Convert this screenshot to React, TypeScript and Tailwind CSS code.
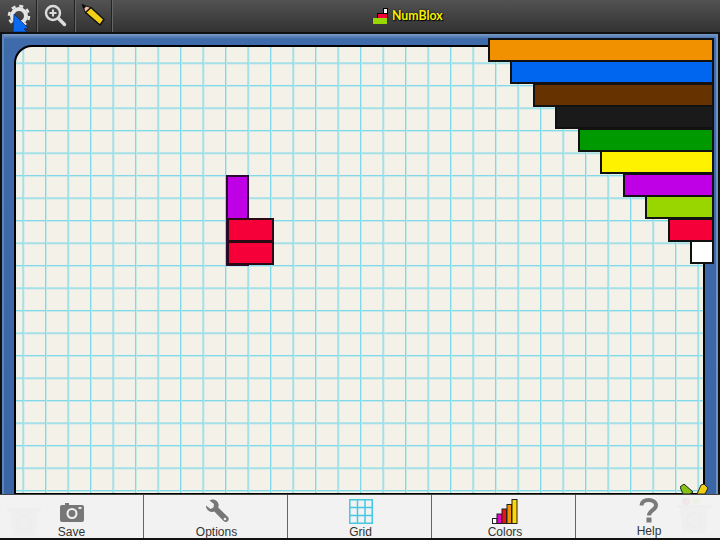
import React from "react";

const rods = [
  { w: 226, c: "#f29100" },
  { w: 203.5, c: "#0066f0" },
  { w: 181, c: "#663300" },
  { w: 158.5, c: "#1a1a1a" },
  { w: 136, c: "#009900" },
  { w: 113.5, c: "#fff200" },
  { w: 91, c: "#bf00e6" },
  { w: 68.5, c: "#99d600" },
  { w: 46, c: "#f50038" },
  { w: 23.5, c: "#ffffff" },
];

function GearIcon() {
  return (
    <svg width="32" height="32" viewBox="0 0 32 32" className="block">
      <circle cx="19" cy="16" r="7" fill="none" stroke="#e4e4e4" strokeWidth="4" />
      <circle cx="19" cy="16" r="10" fill="none" stroke="#e4e4e4" strokeWidth="2.5" strokeDasharray="4 3.85" />
      <polygon points="14,14 28,28 24,29 27,32 13,32" fill="#0a6af0" stroke="#0b2a66" strokeWidth="0.7" />
    </svg>
  );
}

function ZoomIcon() {
  return (
    <svg width="38" height="32" viewBox="0 0 38 32" className="block">
      <circle cx="16" cy="13" r="7" fill="none" stroke="#dcdcdc" strokeWidth="2.4" />
      <path d="M12.5 13h7M16 9.5v7" stroke="#dcdcdc" strokeWidth="2" />
      <path d="M21.5 18.5L27.5 24.5" stroke="#dcdcdc" strokeWidth="3.4" strokeLinecap="round" />
    </svg>
  );
}

function PencilIcon() {
  return (
    <svg width="37" height="32" viewBox="0 0 37 32" className="block">
      <polygon points="7,4.500 17,8 11,14" fill="#f3b9a6" stroke="#111" strokeWidth="1" />
      <polygon points="7,4.500 11.500,6 8.500,9.500" fill="#111" />
      <polygon points="16,7.500 29,19.500 25,25 10.500,12.500" fill="#f2cf14" stroke="#111" strokeWidth="1.500" strokeLinejoin="round" />
    </svg>
  );
}

function LogoMark() {
  return (
    <div className="flex flex-col items-end w-[16px] mb-[2px]">
      <div className="w-[5px] h-[6px] bg-white border border-black" />
      <div className="w-[11px] h-[5px] bg-[#f50038] border-x border-t border-black -mt-px" />
      <div className="w-[16px] h-[6px] bg-[#99d600] border-x border-[#333] border-y-0" />
    </div>
  );
}

function CameraIcon() {
  return (
    <svg width="24" height="20" viewBox="0 0 24 20" className="block">
      <path d="M2 3h3V1h4v2h13a2 2 0 0 1 2 2v13a2 2 0 0 1-2 2H2a2 2 0 0 1-2-2V5a2 2 0 0 1 2-2z" fill="#777" />
      <circle cx="12" cy="11.500" r="5.500" fill="#eee" />
      <circle cx="12" cy="11.500" r="3.400" fill="#777" />
      <rect x="18.500" y="5" width="3" height="2" fill="#eee" />
    </svg>
  );
}

function WrenchIcon() {
  return (
    <svg width="24" height="24" viewBox="0 0 24 24" className="block">
      <path d="M1 6.500L5.500 10l3-1.500L9 5 4.500 1.500C8 -.5 12.500 1 13.500 5c.3 1.300.1 2.500-.3 3.500L23 18c1 1.200 1 2.800 0 4s-3 1.500-4.200.3L9.300 12.600C5 14 .8 11 1 6.500z" fill="#777" />
      <circle cx="20" cy="20" r="1.300" fill="#eee" />
    </svg>
  );
}

function GridIcon() {
  return (
    <svg width="24" height="25" viewBox="0 0 24 25" className="block">
      <path d="M.75.75h22.500v23.500H.75zM8.500.75v23.500M16 .75v23.500M.75 8.500h22.500M.75 16.500h22.500" fill="none" stroke="#45c8e2" strokeWidth="1.500" />
    </svg>
  );
}

function ColorsIcon() {
  return (
    <svg width="26" height="25" viewBox="0 0 26 25" className="block">
      <g stroke="#222" strokeWidth="1">
        <rect x="0.500" y="19.500" width="4.500" height="5" fill="#fff" />
        <rect x="5" y="15" width="4.500" height="9.500" fill="#e000c8" />
        <rect x="10" y="10" width="4.500" height="14.500" fill="#f01010" />
        <rect x="15" y="5.500" width="4.500" height="19" fill="#f29100" />
        <rect x="20" y="0.500" width="5" height="24" fill="#ffd800" />
      </g>
    </svg>
  );
}

function HelpIcon() {
  return (
    <svg width="20" height="25" viewBox="0 0 20 25" className="block" aria-label="Help icon">
      <path d="M2.500 7.500C2.500 4 5.500 2 9.500 2s7.500 2 7.500 5.500c0 4.500-7 5-7 10" fill="none" stroke="#7a7a7a" strokeWidth="4" />
      <rect x="7.500" y="19.500" width="5" height="5" fill="#7a7a7a" />
    </svg>
  );
}

function TrashIcon({ fruit }: { fruit?: boolean }) {
  return (
    <svg width="36" height="36" viewBox="0 0 36 36" className="block opacity-[0.04]">
      {fruit && <circle cx="10" cy="3" r="4" fill="#f50038" />}
      {fruit && <circle cx="20" cy="2" r="4" fill="#99d600" />}
      <path d="M1 7h34v3H1z" fill="#999" />
      <path d="M4 10h28l-3 25H7z" fill="#bbb" />
      <circle cx="18" cy="22" r="7" fill="none" stroke="#888" strokeWidth="2" />
    </svg>
  );
}

const tabs = [
  { label: "Save", icon: <CameraIcon />, pad: "pt-[7px]", gap: "mt-[4px]" },
  { label: "Options", icon: <WrenchIcon />, pad: "pt-[4px] pl-[2px]", gap: "mt-[3px]" },
  { label: "Grid", icon: <GridIcon />, pad: "pt-[4px] pl-[2px]", gap: "mt-[2px]" },
  { label: "Colors", icon: <ColorsIcon />, pad: "pt-[4px] pl-[3px]", gap: "mt-[2px]" },
];

export default function App() {
  return (
    <div className="w-[720px] h-[540px] flex flex-col overflow-hidden bg-[#111] font-['Liberation_Sans',Arial,sans-serif]">
      <header className="h-[32px] shrink-0 flex items-stretch bg-[linear-gradient(to_bottom,#525252,#333333)]">
        <div className="w-[37px] border-r border-[#222] shadow-[1px_0_0_#666]"><GearIcon /></div>
        <div className="w-[38px] border-r border-[#222] shadow-[1px_0_0_#666]"><ZoomIcon /></div>
        <div className="w-[37px] border-r border-[#222] shadow-[1px_0_0_#666]"><PencilIcon /></div>
        <div className="ml-[260px] flex items-center gap-[4px] pt-[1px]">
          <LogoMark />
          <span className="font-['Lato',sans-serif] font-bold text-[12.300px] leading-none text-[#f5f000] [text-shadow:0_0_2px_#000,1px_1px_1px_#000]">NumBlox</span>
        </div>
      </header>

      <main className="relative z-0 flex-1 flex flex-col pt-[11px] pl-[12px] pr-[13px] border-x-2 border-t-2 border-[#111] border-b-0 bg-[linear-gradient(to_bottom,#7c9cc8_0px,#3f6bab_5px,#3b66a6_100%)] shadow-[inset_2px_0_0_#5c86bb,inset_-2px_0_0_#6f92bf]">
        <div className="relative flex-1 rounded-tl-[18px] border-2 border-black border-b-[1px] bg-[#f3f1e8] bg-[linear-gradient(to_right,#7fd8e8_1px,#c4e9e9_1px,#c4e9e9_2px,transparent_2px),linear-gradient(to_bottom,#7fd8e8_1px,#c4e9e9_1px,#c4e9e9_2px,transparent_2px)] bg-[size:22.5px_22.5px] bg-[position:6.5px_15.5px]">
          <div className="absolute left-[209.500px] top-[128px] w-[23.500px] h-[91px] bg-[#bf00e6] border-2 border-[#2a0a33]" />
          <div className="absolute left-[211px] top-[171px] w-[46.500px] flex flex-col">
            <div className="h-[24px] bg-[#f50038] border-2 border-[#2a0a14]" />
            <div className="h-[24px] -mt-[1.500px] bg-[#f50038] border-2 border-[#2a0a14]" />
          </div>

          <div className="absolute top-[-9.500px] right-[-10.500px] flex flex-col items-end">
            {rods.map((r) => (
              <div
                key={r.c}
                className="h-[24px] mb-[-1.500px] border-2 border-[#111]"
                style={{ width: r.w, backgroundColor: r.c }}
              />
            ))}
          </div>

          <svg width="32" height="10" viewBox="0 0 32 10" className="absolute right-[-9px] bottom-[-1px]">
            <polygon points="0,3 4,0 13,8 10,10 3,10" fill="#86c214" stroke="#222" strokeWidth="1" />
            <polygon points="17,10 21,1 24,0 28,4 25,10" fill="#f0cf10" stroke="#222" strokeWidth="1" />
          </svg>
        </div>
      </main>

      <footer className="relative z-10 h-[44px] shrink-0 flex bg-[#f1f2f1] border-t border-[#444] text-[12px] leading-none text-[#333] mb-[2px]">
        <div className="absolute left-[6px] top-[6px]"><TrashIcon /></div>
        <div className="absolute right-[8px] top-[3px]"><TrashIcon fruit /></div>
        {tabs.map((t) => (
          <div key={t.label} className={`w-[144px] flex flex-col items-center border-r border-[#666] ${t.pad}`}>
            {t.icon}
            <span className={t.gap}>{t.label}</span>
          </div>
        ))}
        <div className="w-[144px] pl-[2px] pt-[3px] flex flex-col items-center">
          <HelpIcon />
          <span className="mt-[2px]">Help</span>
        </div>
      </footer>
    </div>
  );
}
